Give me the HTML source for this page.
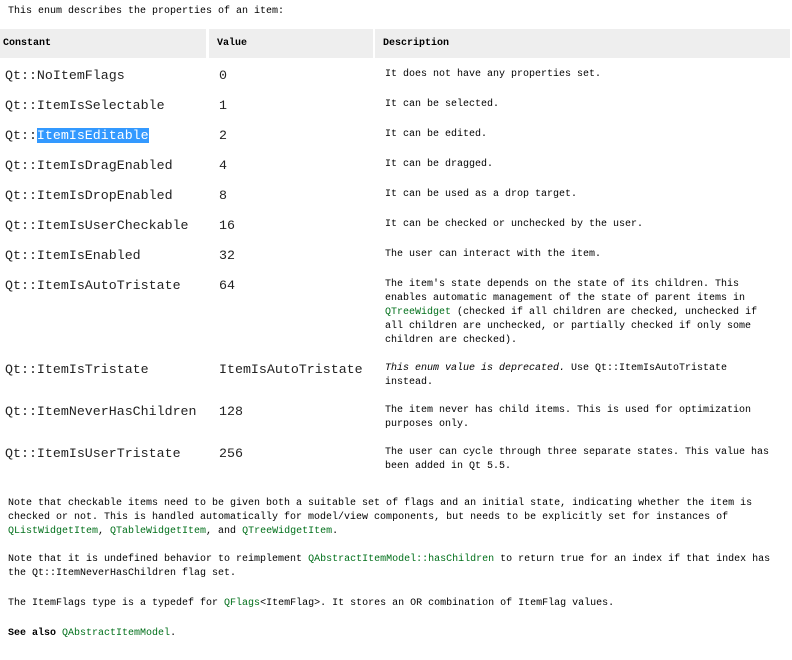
<!DOCTYPE html>
<html><head><meta charset="utf-8"><style>
body{margin:0;width:792px;height:660px;background:#fff;position:relative;font-family:"Liberation Mono",monospace;color:#000;overflow:hidden}
.t{position:absolute;font-size:10px;line-height:14px;white-space:pre;margin-top:2px}
.c{position:absolute;font-size:13.3px;line-height:14px;white-space:pre;color:#222;margin-top:1px}
.h{position:absolute;top:29px;height:29px;background:#eeeeee;font-weight:bold;font-size:10px;line-height:29px}
a{color:#006f1a;text-decoration:none}
.sel{background:#3399ff;color:#fff}
</style></head><body>
<div class="t" style="left:8px;top:3px">This enum describes the properties of an item:</div>
<div class="h" style="left:0;width:206px;padding-left:3px;box-sizing:border-box">Constant</div>
<div class="h" style="left:209px;width:164px;padding-left:8px;box-sizing:border-box">Value</div>
<div class="h" style="left:375px;width:415px;padding-left:8px;box-sizing:border-box">Description</div>

<div class="c" style="left:5px;top:68px">Qt::NoItemFlags</div><div class="c" style="left:219px;top:68px">0</div><div class="t" style="left:385px;top:66px">It does not have any properties set.</div>
<div class="c" style="left:5px;top:98px">Qt::ItemIsSelectable</div><div class="c" style="left:219px;top:98px">1</div><div class="t" style="left:385px;top:96px">It can be selected.</div>
<div class="c" style="left:5px;top:128px">Qt::<span class="sel">ItemIsEditable</span></div><div class="c" style="left:219px;top:128px">2</div><div class="t" style="left:385px;top:126px">It can be edited.</div>
<div class="c" style="left:5px;top:158px">Qt::ItemIsDragEnabled</div><div class="c" style="left:219px;top:158px">4</div><div class="t" style="left:385px;top:156px">It can be dragged.</div>
<div class="c" style="left:5px;top:188px">Qt::ItemIsDropEnabled</div><div class="c" style="left:219px;top:188px">8</div><div class="t" style="left:385px;top:186px">It can be used as a drop target.</div>
<div class="c" style="left:5px;top:218px">Qt::ItemIsUserCheckable</div><div class="c" style="left:219px;top:218px">16</div><div class="t" style="left:385px;top:216px">It can be checked or unchecked by the user.</div>
<div class="c" style="left:5px;top:248px">Qt::ItemIsEnabled</div><div class="c" style="left:219px;top:248px">32</div><div class="t" style="left:385px;top:246px">The user can interact with the item.</div>
<div class="c" style="left:5px;top:278px">Qt::ItemIsAutoTristate</div><div class="c" style="left:219px;top:278px">64</div><div class="t" style="left:385px;top:276px">The item's state depends on the state of its children. This
enables automatic management of the state of parent items in
<a>QTreeWidget</a> (checked if all children are checked, unchecked if
all children are unchecked, or partially checked if only some
children are checked).</div>
<div class="c" style="left:5px;top:362px">Qt::ItemIsTristate</div><div class="c" style="left:219px;top:362px">ItemIsAutoTristate</div><div class="t" style="left:385px;top:360px"><i>This enum value is deprecated.</i> Use Qt::ItemIsAutoTristate
instead.</div>
<div class="c" style="left:5px;top:404px">Qt::ItemNeverHasChildren</div><div class="c" style="left:219px;top:404px">128</div><div class="t" style="left:385px;top:402px">The item never has child items. This is used for optimization
purposes only.</div>
<div class="c" style="left:5px;top:446px">Qt::ItemIsUserTristate</div><div class="c" style="left:219px;top:446px">256</div><div class="t" style="left:385px;top:444px">The user can cycle through three separate states. This value has
been added in Qt 5.5.</div>

<div class="t" style="left:8px;top:495px">Note that checkable items need to be given both a suitable set of flags and an initial state, indicating whether the item is
checked or not. This is handled automatically for model/view components, but needs to be explicitly set for instances of
<a>QListWidgetItem</a>, <a>QTableWidgetItem</a>, and <a>QTreeWidgetItem</a>.</div>
<div class="t" style="left:8px;top:551px">Note that it is undefined behavior to reimplement <a>QAbstractItemModel::hasChildren</a> to return true for an index if that index has
the Qt::ItemNeverHasChildren flag set.</div>
<div class="t" style="left:8px;top:595px">The ItemFlags type is a typedef for <a>QFlags</a>&lt;ItemFlag&gt;. It stores an OR combination of ItemFlag values.</div>
<div class="t" style="left:8px;top:625px"><b>See also</b> <a>QAbstractItemModel</a>.</div>
</body></html>
